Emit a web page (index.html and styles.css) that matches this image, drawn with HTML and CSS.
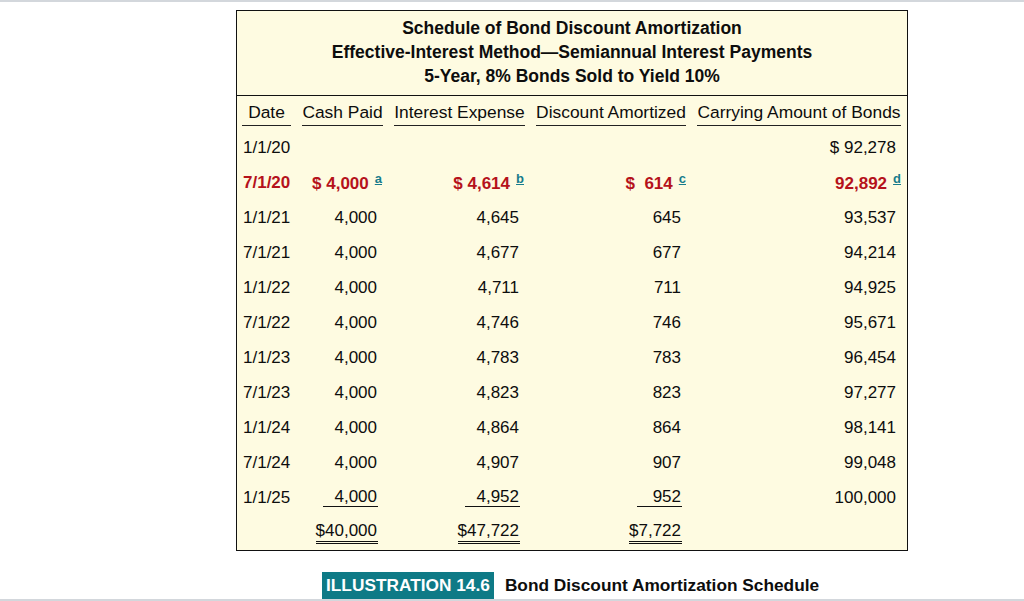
FILE: index.html
```html
<!DOCTYPE html>
<html lang="en">
<head>
<meta charset="utf-8">
<title>Schedule of Bond Discount Amortization</title>
<link rel="stylesheet" href="styles.css">
</head>
<body>
<div class="page">
  <div class="schedule">
    <div class="title">
      <div>Schedule of Bond Discount Amortization</div>
      <div>Effective-Interest Method—Semiannual Interest Payments</div>
      <div>5-Year, 8% Bonds Sold to Yield 10%</div>
    </div>
    <div class="table">
      <div class="row head">
        <div>Date</div><div>Cash Paid</div><div>Interest Expense</div><div>Discount Amortized</div><div>Carrying Amount of Bonds</div>
      </div>
      <div class="row">
        <div class="date">1/1/20</div><div class="num"></div><div class="num"></div><div class="num"></div><div class="num c5">$ 92,278</div>
      </div>
      <div class="row red">
        <div class="date">7/1/20</div>
        <div class="num fn">$ 4,000<span class="sup">a</span></div>
        <div class="num fn">$ 4,614<span class="sup">b</span></div>
        <div class="num fn fn0">$&nbsp;&nbsp;614<span class="sup">c</span></div>
        <div class="num fn fn0">92,892<span class="sup">d</span></div>
      </div>
      <div class="row"><div class="date">1/1/21</div><div class="num">4,000</div><div class="num">4,645</div><div class="num c4">645</div><div class="num c5">93,537</div></div>
      <div class="row"><div class="date">7/1/21</div><div class="num">4,000</div><div class="num">4,677</div><div class="num c4">677</div><div class="num c5">94,214</div></div>
      <div class="row"><div class="date">1/1/22</div><div class="num">4,000</div><div class="num">4,711</div><div class="num c4">711</div><div class="num c5">94,925</div></div>
      <div class="row"><div class="date">7/1/22</div><div class="num">4,000</div><div class="num">4,746</div><div class="num c4">746</div><div class="num c5">95,671</div></div>
      <div class="row"><div class="date">1/1/23</div><div class="num">4,000</div><div class="num">4,783</div><div class="num c4">783</div><div class="num c5">96,454</div></div>
      <div class="row"><div class="date">7/1/23</div><div class="num">4,000</div><div class="num">4,823</div><div class="num c4">823</div><div class="num c5">97,277</div></div>
      <div class="row"><div class="date">1/1/24</div><div class="num">4,000</div><div class="num">4,864</div><div class="num c4">864</div><div class="num c5">98,141</div></div>
      <div class="row"><div class="date">7/1/24</div><div class="num">4,000</div><div class="num">4,907</div><div class="num c4">907</div><div class="num c5">99,048</div></div>
      <div class="row">
        <div class="date">1/1/25</div>
        <div class="num ul"><span class="u w54">4,000</span></div>
        <div class="num ul"><span class="u w54">4,952</span></div>
        <div class="num ul c4"><span class="u w44">952</span></div>
        <div class="num c5">100,000</div>
      </div>
      <div class="row">
        <div class="date"></div>
        <div class="num ul"><span class="uu">$40,000</span></div>
        <div class="num ul"><span class="uu">$47,722</span></div>
        <div class="num ul c4"><span class="uu">$7,722</span></div>
        <div class="num"></div>
      </div>
    </div>
  </div>
  <div class="caption">
    <span class="label">ILLUSTRATION 14.6</span>
    <span class="caption-text">Bond Discount Amortization Schedule</span>
  </div>
</div>
</body>
</html>
```

FILE: styles.css
```css
html, body {
  margin: 0;
  padding: 0;
  background: #ffffff;
}

body {
  font-family: "Liberation Sans", Arial, Helvetica, sans-serif;
  color: #0d0d0d;
  overflow: hidden;
}

.page {
  height: 601px;
  box-sizing: border-box;
  border-top: 2px solid #d3d7dc;
  border-bottom: 2px solid #d3d7dc;
  padding-top: 8px;
}

.schedule {
  margin-left: 236px;
  width: 672px;
  box-sizing: border-box;
  border: 1px solid #111111;
  background: #fefbe1;
}

.title {
  text-align: center;
  font-weight: bold;
  font-size: 17.5px;
  line-height: 24px;
  padding: 5px 0 7px;
  border-bottom: 1px solid #111111;
}

.table {
  padding: 0 6px 0 5px;
}

.row {
  display: grid;
  grid-template-columns: 49px 81px 131px 150px 204px;
  column-gap: 11px;
  font-size: 17px;
  height: 35px;
  align-items: center;
  line-height: 18px;
}

.row.head {
  height: auto;
  align-items: end;
  padding: 6px 0 4px;
  line-height: 20px;
  font-size: 17.4px;
}

.row.head > div {
  text-align: center;
  border-bottom: 1px solid #222222;
  padding-bottom: 3px;
  white-space: nowrap;
}

.date {
  padding-left: 1px;
}

.num {
  text-align: right;
  padding-right: 6px;
  white-space: nowrap;
}

.num.c4 {
  padding-right: 5px;
}

.num.c5 {
  padding-right: 5px;
}

.red {
  color: #b5121b;
  font-weight: bold;
}

.num.fn {
  padding-right: 1px;
}

.num.fn0 {
  padding-right: 0;
}

.sup {
  display: inline-block;
  font-size: 13px;
  line-height: 12px;
  font-weight: bold;
  color: #177c8c;
  text-decoration: underline;
  text-underline-offset: 1px;
  vertical-align: 6px;
  margin-left: 6px;
}

.num.ul {
  padding-right: 5px;
}

.num.ul.c4 {
  padding-right: 4px;
}

.u {
  display: inline-block;
  border-bottom: 1px solid #111111;
  padding-right: 1px;
  text-align: right;
}

.w54 {
  min-width: 54px;
}

.w44 {
  min-width: 44px;
}

.uu {
  display: inline-block;
  border-bottom: 3px double #111111;
  padding-right: 1px;
  padding-bottom: 1px;
}

.caption {
  margin-left: 322px;
  margin-top: 21px;
  height: 27px;
  display: flex;
  align-items: center;
  font-size: 17.3px;
  font-weight: bold;
}

.label {
  background: #0e7a86;
  color: #ffffff;
  line-height: 27px;
  padding: 0 4px 0 4px;
}

.caption-text {
  margin-left: 11px;
  color: #0d0d0d;
}
```
